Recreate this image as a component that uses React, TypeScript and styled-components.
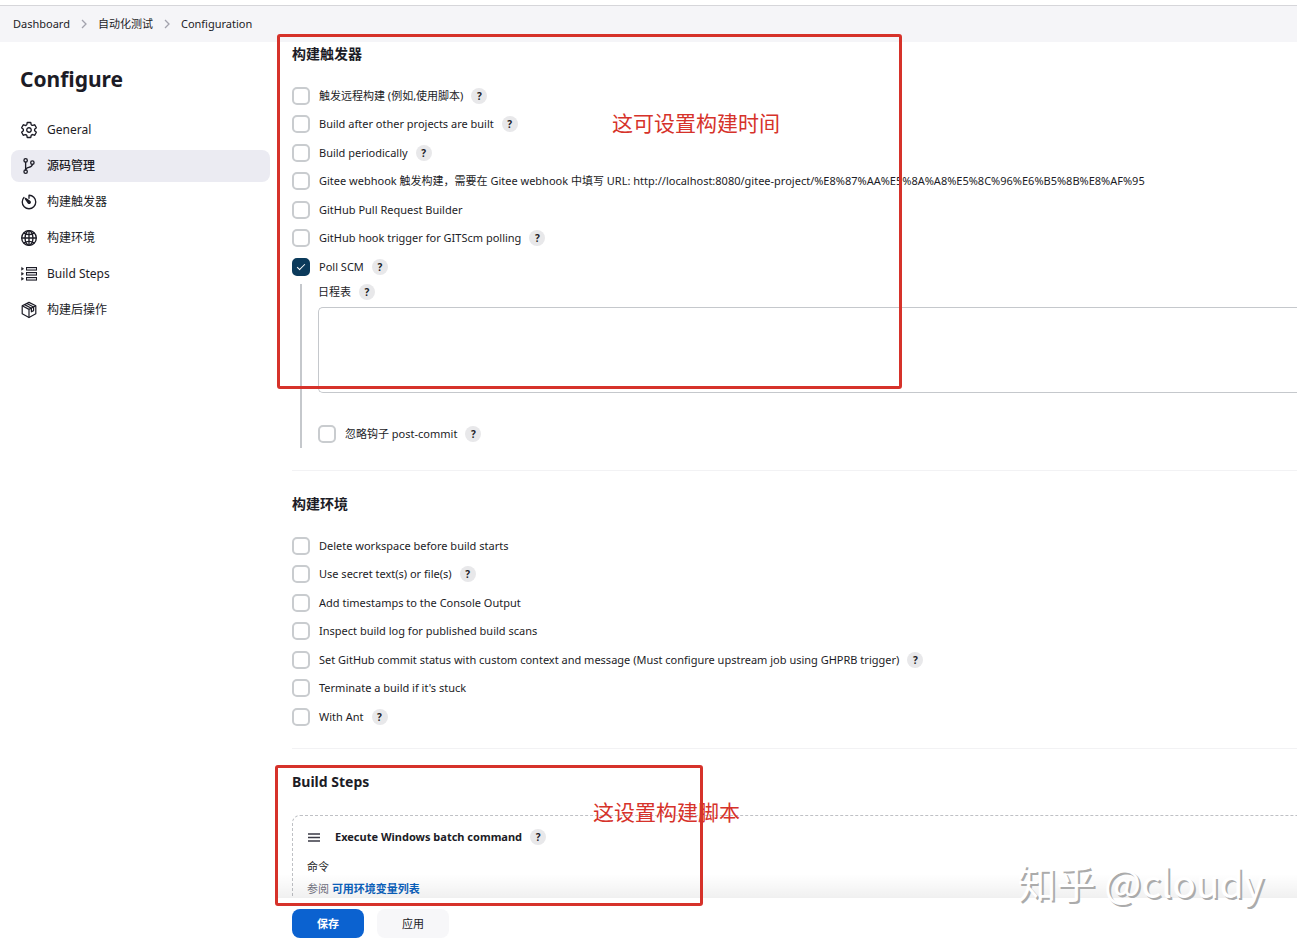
import React from 'react';
import styled, { createGlobalStyle, css } from 'styled-components';
import {
  IoSettingsOutline,
  IoGitBranchOutline,
  IoTimerOutline,
  IoGlobeOutline,
} from 'react-icons/io5';

const GlobalStyle = createGlobalStyle`
  *, *::before, *::after { box-sizing: border-box; }
  body {
    margin: 0;
    background: #fff;
    color: #1c1c26;
    font-family: "Noto Sans", "Noto Sans CJK SC", sans-serif;
    font-size: 11px;
    line-height: 20px;
  }
  button, input, textarea { font: inherit; color: inherit; }
`;

const Page = styled.div`
  position: relative;
  display: flex;
  flex-direction: column;
  height: 100vh;
  overflow: hidden;
`;

const Breadcrumbs = styled.nav`
  display: flex;
  align-items: center;
  gap: 9px;
  height: 37px;
  flex: none;
  margin-top: 5px;
  padding: 0 13px;
  border-top: 1px solid #d6d6da;
  background: #f5f5f8;
`;

const Crumb = styled.a`
  color: inherit;
  text-decoration: none;
`;

const Body = styled.div`
  display: flex;
  flex: 1;
  min-height: 0;
`;

const Sidebar = styled.aside`
  flex: none;
  width: 278px;
  padding: 22px 8px 0 11px;
`;

const Title = styled.h1`
  margin: 0 0 20px;
  padding-left: 9px;
  font-size: 21px;
  line-height: 30px;
`;

const NavList = styled.div`
  display: flex;
  flex-direction: column;
  gap: 4px;
`;

const NavItem = styled.a<{ $active?: boolean }>`
  display: flex;
  align-items: center;
  gap: 9px;
  height: 32px;
  padding: 0 9px;
  border-radius: 8px;
  font-size: 12px;
  color: inherit;
  text-decoration: none;
  ${(p) => p.$active && css`background: #ebebf2; font-weight: 500;`}
  svg { width: 18px; height: 18px; flex: none; }
  svg[viewBox="0 0 512 512"] * { stroke-width: 38px; }
`;

const Main = styled.main`
  display: flex;
  flex-direction: column;
  flex: 1;
  min-width: 0;
`;

const Scroller = styled.div`
  flex: 1;
  min-height: 0;
  overflow: auto;
  scrollbar-width: none;
  padding-left: 14px;
`;

const Section = styled.section`
  & + & {
    border-top: 1px solid #f2f2f4;
    padding-top: 21px;
  }
`;

const SectionTitle = styled.h2`
  margin: 0 0 16px;
  font-size: 14px;
  line-height: 24px;
`;

const Options = styled.div`
  margin-bottom: 17px;
`;

const OptionRow = styled.div`
  display: flex;
  align-items: center;
  gap: 8px;
  height: 28px;
  white-space: nowrap;
  &:nth-child(even) { margin-bottom: 1px; }
`;

const CheckLabel = styled.label`
  display: flex;
  align-items: center;
  gap: 9px;
`;

const Checkbox = styled.input`
  appearance: none;
  display: grid;
  place-items: center;
  width: 18px;
  height: 18px;
  margin: 0;
  border: 2px solid #c9cccf;
  border-radius: 5px;
  background: #fff;
  &:checked {
    border-color: #0b3a5b;
    background: #0b3a5b;
  }
  &:checked::before {
    content: "";
    width: 8px;
    height: 4px;
    margin-bottom: 3px;
    border: solid #fff;
    border-width: 0 0 1px 1px;
    transform: rotate(-45deg);
  }
`;

const HelpButton = styled.button`
  flex: none;
  width: 16px;
  height: 16px;
  padding: 0;
  border: 0;
  border-radius: 50%;
  background: #e8e8ea;
  font-size: 10px;
  font-weight: 700;
  line-height: 16px;
  text-align: center;
`;

const Nested = styled.div`
  margin: 3px 0 22px 8px;
  padding-left: 16px;
  border-left: 2px solid #c5c8cc;
`;

const FieldLabel = styled.div`
  display: flex;
  align-items: center;
  gap: 8px;
  height: 16px;
  margin-bottom: 7px;
`;

const Schedule = styled.textarea`
  display: block;
  width: 100%;
  height: 86px;
  margin-bottom: 27px;
  padding: 8px;
  border: 1px solid #c5c8cc;
  border-right: 0;
  border-radius: 5px 0 0 5px;
  background: #fff;
  resize: none;
  outline: none;
`;

const StepCard = styled.div`
  height: 220px;
  margin-top: 21px;
  padding: 11px 14px;
  border: 1px dashed #bfc1c5;
  border-right: 0;
  border-radius: 8px 0 0 0;
`;

const StepHeader = styled.div`
  display: flex;
  align-items: center;
  gap: 8px;
  margin-bottom: 9px;
  font-weight: 700;
  svg { margin-right: 6px; }
`;

const StepText = styled.div`
  line-height: 22px;
`;

const StepHint = styled(StepText)`
  color: #73737f;
  a { color: #0b62bd; font-weight: 700; text-decoration: none; }
`;

const Footer = styled.footer`
  position: relative;
  display: flex;
  flex: none;
  gap: 13px;
  height: 43px;
  padding: 11px 14px 3px;
  background: #fff;
  &::before {
    content: "";
    position: absolute;
    left: 0;
    right: 0;
    bottom: 100%;
    height: 24px;
    background: linear-gradient(transparent, rgba(0, 0, 0, 0.06));
    pointer-events: none;
  }
`;

const ActionButton = styled.button<{ $primary?: boolean }>`
  width: 72px;
  border: 0;
  border-radius: 8px;
  background: ${(p) => (p.$primary ? '#0b62d0' : '#f7f7f9')};
  color: ${(p) => (p.$primary ? '#fff' : 'inherit')};
  font-weight: ${(p) => (p.$primary ? 700 : 400)};
`;

const Marker = styled.div<{ $x: number; $y: number; $w: number; $h: number }>`
  position: absolute;
  left: ${(p) => p.$x}px;
  top: ${(p) => p.$y}px;
  width: ${(p) => p.$w}px;
  height: ${(p) => p.$h}px;
  border: 3px solid #d6322a;
  border-radius: 3px;
  pointer-events: none;
`;

const Note = styled.div<{ $x: number; $y: number }>`
  position: absolute;
  left: ${(p) => p.$x}px;
  top: ${(p) => p.$y}px;
  color: #d6322a;
  font-family: "Noto Sans CJK SC", sans-serif;
  font-size: 21px;
  font-weight: 400;
  line-height: 30px;
  white-space: nowrap;
`;

const Watermark = styled.div`
  position: absolute;
  right: 33px;
  bottom: 34px;
  color: #fff;
  font-family: "Noto Sans CJK SC", sans-serif;
  font-size: 39px;
  line-height: 52px;
  text-shadow: 2px 2px 0 #ababab;
  white-space: nowrap;
  pointer-events: none;
`;

const Chevron = () => (
  <svg width="10" height="10" viewBox="0 0 10 10" fill="none" stroke="#a3a3ad" strokeWidth="1.3">
    <path d="M3 1l4 4-4 4" />
  </svg>
);

const StepsIcon = () => (
  <svg viewBox="0 0 18 18" fill="none" stroke="currentColor" strokeWidth="1">
    <g fill="#d4d4d8">
      <rect x="6.5" y="2.5" width="10" height="2.6" />
      <rect x="6.5" y="7.5" width="10" height="2.6" />
      <rect x="6.5" y="12.5" width="10" height="2.6" />
    </g>
    <path d="M1.6 2.4v2.8l2-1.4zM1.6 7.4v2.8l2-1.4zM1.6 12.4v2.8l2-1.4z" fill="currentColor" strokeWidth="0.6" />
  </svg>
);

const PackageIcon = () => (
  <svg viewBox="0 0 18 18" fill="none" stroke="currentColor" strokeWidth="1.2" strokeLinejoin="round">
    <path d="M9 1.4l6.8 3.4v8L9 16.6l-6.8-3.8v-8z" />
    <path d="M2.2 4.8L9 8.4l6.8-3.6M9 8.4v8.2" />
    <path d="M4.6 3.6l6.8 3.6v3.6l2.2-1.2V6L6.8 2.5" />
  </svg>
);

const DragIcon = () => (
  <svg width="14" height="12" viewBox="0 0 14 12" stroke="#3a3a45" strokeWidth="1.4">
    <path d="M1 3h12M1 6.5h12M1 10h12" />
  </svg>
);

const Help = () => <HelpButton type="button" aria-label="Help">?</HelpButton>;

interface OptionData {
  text: string;
  help?: boolean;
  checked?: boolean;
}

const Option = ({ text, help, checked }: OptionData) => (
  <OptionRow>
    <CheckLabel>
      <Checkbox type="checkbox" defaultChecked={checked} />
      {text}
    </CheckLabel>
    {help && <Help />}
  </OptionRow>
);

const triggers: OptionData[] = [
  { text: '触发远程构建 (例如,使用脚本)', help: true },
  { text: 'Build after other projects are built', help: true },
  { text: 'Build periodically', help: true },
  {
    text: 'Gitee webhook 触发构建，需要在 Gitee webhook 中填写 URL: http://localhost:8080/gitee-project/%E8%87%AA%E5%8A%A8%E5%8C%96%E6%B5%8B%E8%AF%95',
  },
  { text: 'GitHub Pull Request Builder' },
  { text: 'GitHub hook trigger for GITScm polling', help: true },
  { text: 'Poll SCM', help: true, checked: true },
];

const environment: OptionData[] = [
  { text: 'Delete workspace before build starts' },
  { text: 'Use secret text(s) or file(s)', help: true },
  { text: 'Add timestamps to the Console Output' },
  { text: 'Inspect build log for published build scans' },
  {
    text: 'Set GitHub commit status with custom context and message (Must configure upstream job using GHPRB trigger)',
    help: true,
  },
  { text: "Terminate a build if it's stuck" },
  { text: 'With Ant', help: true },
];

const navigation = [
  { text: 'General', icon: <IoSettingsOutline /> },
  { text: '源码管理', icon: <IoGitBranchOutline />, active: true },
  { text: '构建触发器', icon: <IoTimerOutline /> },
  { text: '构建环境', icon: <IoGlobeOutline /> },
  { text: 'Build Steps', icon: <StepsIcon /> },
  { text: '构建后操作', icon: <PackageIcon /> },
];

export default function App() {
  return (
    <Page>
      <GlobalStyle />
      <Breadcrumbs>
        <Crumb href="#">Dashboard</Crumb>
        <Chevron />
        <Crumb href="#">自动化测试</Crumb>
        <Chevron />
        <Crumb href="#">Configuration</Crumb>
      </Breadcrumbs>
      <Body>
        <Sidebar>
          <Title>Configure</Title>
          <NavList>
            {navigation.map((n) => (
              <NavItem key={n.text} href="#" $active={n.active}>
                {n.icon}
                {n.text}
              </NavItem>
            ))}
          </NavList>
        </Sidebar>
        <Main>
          <Scroller>
            <Section>
              <SectionTitle>构建触发器</SectionTitle>
              <div>
                {triggers.map((o) => (
                  <Option key={o.text} {...o} />
                ))}
              </div>
              <Nested>
                <FieldLabel>
                  <label htmlFor="schedule">日程表</label>
                  <Help />
                </FieldLabel>
                <Schedule id="schedule" />
                <Option text="忽略钩子 post-commit" help />
              </Nested>
            </Section>
            <Section>
              <SectionTitle>构建环境</SectionTitle>
              <Options>
                {environment.map((o) => (
                  <Option key={o.text} {...o} />
                ))}
              </Options>
            </Section>
            <Section>
              <SectionTitle>Build Steps</SectionTitle>
              <StepCard>
                <StepHeader>
                  <DragIcon />
                  Execute Windows batch command
                  <Help />
                </StepHeader>
                <StepText>命令</StepText>
                <StepHint>
                  参阅 <a href="#">可用环境变量列表</a>
                </StepHint>
              </StepCard>
            </Section>
          </Scroller>
          <Footer>
            <ActionButton type="button" $primary>保存</ActionButton>
            <ActionButton type="button">应用</ActionButton>
          </Footer>
        </Main>
      </Body>
      <Marker $x={277} $y={34} $w={625} $h={355} />
      <Note $x={612} $y={107}>这可设置构建时间</Note>
      <Marker $x={275} $y={765} $w={428} $h={141} />
      <Note $x={593} $y={796}>这设置构建脚本</Note>
      <Watermark>知乎 @cloudy</Watermark>
    </Page>
  );
}
